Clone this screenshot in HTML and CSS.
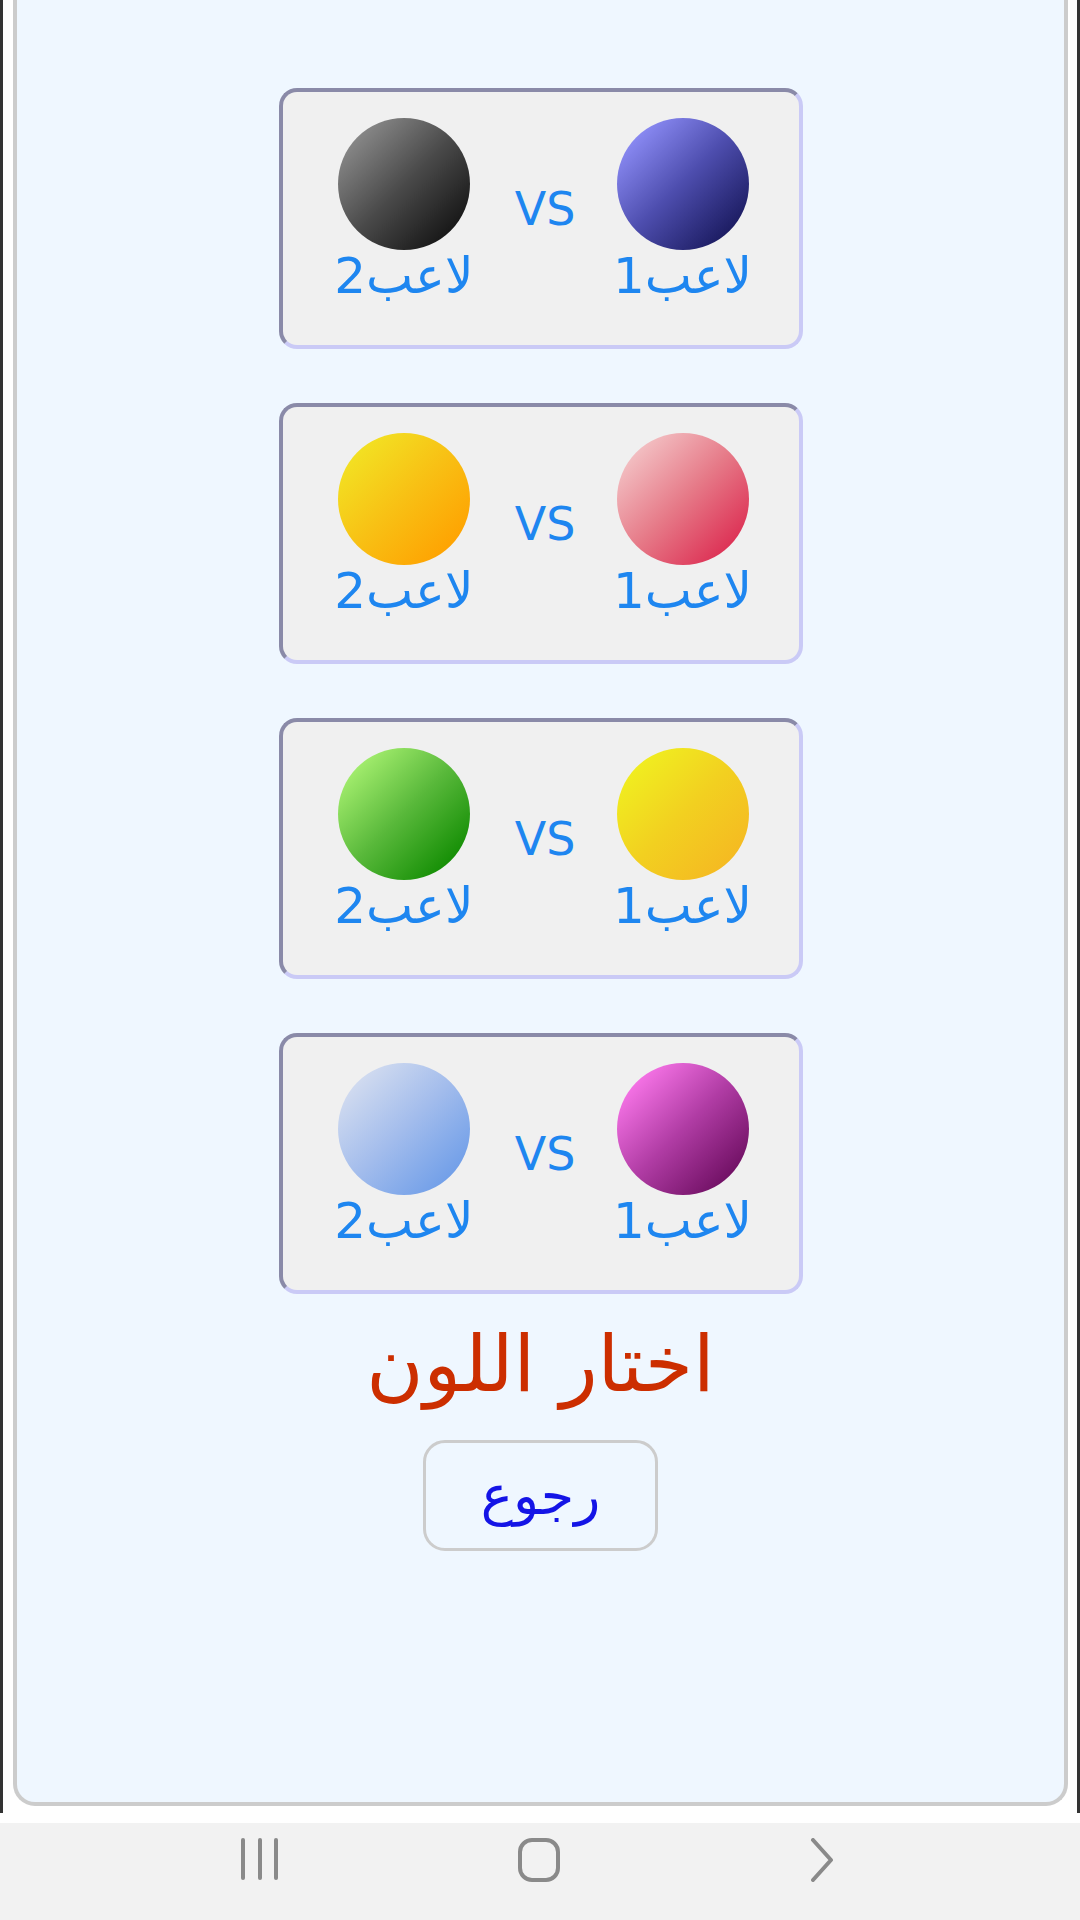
FILE: index.html
```html
<!DOCTYPE html>
<html lang="ar" dir="rtl">
<head>
  <meta charset="UTF-8" />
  <meta name="viewport" content="width=device-width, initial-scale=1.0"/>
  <title>اختار اللون</title>
  <link rel="stylesheet" href="styles.css">
</head>
<body>
  <div class="frame">
    <div class="panel">

      <div class="card">
        <div class="player">
          <div class="ball ball-blue"></div>
          <div class="name">لاعب1</div>
        </div>
        <div class="vs">VS</div>
        <div class="player">
          <div class="ball ball-black"></div>
          <div class="name">لاعب2</div>
        </div>
      </div>

      <div class="card">
        <div class="player">
          <div class="ball ball-pink"></div>
          <div class="name">لاعب1</div>
        </div>
        <div class="vs">VS</div>
        <div class="player">
          <div class="ball ball-orange"></div>
          <div class="name">لاعب2</div>
        </div>
      </div>

      <div class="card">
        <div class="player">
          <div class="ball ball-yellow"></div>
          <div class="name">لاعب1</div>
        </div>
        <div class="vs">VS</div>
        <div class="player">
          <div class="ball ball-green"></div>
          <div class="name">لاعب2</div>
        </div>
      </div>

      <div class="card">
        <div class="player">
          <div class="ball ball-purple"></div>
          <div class="name">لاعب1</div>
        </div>
        <div class="vs">VS</div>
        <div class="player">
          <div class="ball ball-sky"></div>
          <div class="name">لاعب2</div>
        </div>
      </div>

      <h1 class="titulo">اختار اللون</h1>

      <button class="boton-back">رجوع</button>
    </div>
  </div>

  <div class="navbar">
    <svg class="nav-icon" width="40" height="42" viewBox="0 0 40 42">
      <line x1="3" y1="2" x2="3" y2="40" stroke="#8a8a8a" stroke-width="4" stroke-linecap="round"/>
      <line x1="20" y1="2" x2="20" y2="40" stroke="#8a8a8a" stroke-width="4" stroke-linecap="round"/>
      <line x1="36" y1="2" x2="36" y2="40" stroke="#8a8a8a" stroke-width="4" stroke-linecap="round"/>
    </svg>
    <svg class="nav-icon" width="44" height="44" viewBox="0 0 44 44">
      <rect x="3" y="2" width="38" height="40" rx="12" ry="12" fill="none" stroke="#8a8a8a" stroke-width="4"/>
    </svg>
    <svg class="nav-icon" width="28" height="44" viewBox="0 0 28 44">
      <polyline points="4,2 22,22 4,42" fill="none" stroke="#8a8a8a" stroke-width="4" stroke-linecap="round" stroke-linejoin="round"/>
    </svg>
  </div>
</body>
</html>
```

FILE: styles.css
```css
body, html {
  margin: 0;
  padding: 0;
  background: #fff;
  font-family: 'DejaVu Sans', sans-serif;
}
.frame {
  height: 1813px;
  box-sizing: border-box;
  border-left: 3px solid #333;
  border-right: 3px solid #333;
  padding: 0 9px 0 10px;
  margin-bottom: 10px;
}
.panel {
  height: 1806px;
  box-sizing: border-box;
  background: #eff7ff;
  border: 4px solid #ccc;
  border-top: none;
  border-radius: 0 0 22px 22px;
  display: flex;
  flex-direction: column;
  align-items: center;
  padding-top: 88px;
}
.card {
  width: 524px;
  height: 261px;
  box-sizing: border-box;
  background: #f0f0f0;
  border: 4px solid;
  border-color: #8a8aa8 #cacaf6 #cacaf6 #8a8aa8;
  border-radius: 18px;
  margin-bottom: 54px;
  display: flex;
  justify-content: flex-start;
  align-items: flex-start;
  padding: 26px 36px 0 0;
}
.card:nth-of-type(4) { margin-bottom: 0; }
.player {
  width: 160px;
  display: flex;
  flex-direction: column;
  align-items: center;
}
.ball {
  width: 132px;
  height: 132px;
  border-radius: 50%;
}
.ball-blue { background: linear-gradient(135deg, #9090fa 10%, #4c4cac 50%, #17175a 90%); }
.ball-black { background: linear-gradient(135deg, #8e8e8e 10%, #4a4a4a 50%, #121212 90%); }
.ball-pink { background: linear-gradient(135deg, #f4c6c8 10%, #e67a88 50%, #dc2a50 90%); }
.ball-orange { background: linear-gradient(135deg, #f2e424 10%, #f8c014 50%, #ffa000 90%); }
.ball-yellow { background: linear-gradient(135deg, #f0f020 10%, #f2d020 50%, #f5b822 90%); }
.ball-green { background: linear-gradient(135deg, #aaf272 10%, #58b83a 50%, #0e8a00 90%); }
.ball-purple { background: linear-gradient(135deg, #fc78ec 10%, #b03ca4 50%, #6a0c5e 90%); }
.ball-sky { background: linear-gradient(135deg, #d6def0 10%, #a2bcec 50%, #6c9ce8 90%); }
.name {
  font-size: 50px;
  line-height: 52px;
  color: #1e86f0;
}
.vs {
  font-size: 46px;
  line-height: 50px;
  color: #1e86f0;
  margin: 66px 27px 0 31px;
  direction: ltr;
}
.titulo {
  margin: 20px 0 0;
  font-size: 78px;
  line-height: 100px;
  font-weight: normal;
  color: #cc2e00;
}
.boton-back {
  margin-top: 26px;
  width: 235px;
  height: 111px;
  background: transparent;
  border: 3px solid #ccc;
  border-radius: 22px;
  font-family: 'DejaVu Sans', sans-serif;
  font-size: 54px;
  color: #1414e6;
}
.navbar {
  height: 97px;
  box-sizing: border-box;
  padding-top: 15px;
  background: #f2f2f2;
  display: flex;
  align-items: flex-start;
  direction: ltr;
}
.navbar .nav-icon:nth-child(1) { margin-left: 240px; }
.navbar .nav-icon:nth-child(2) { margin-left: 237px; }
.navbar .nav-icon:nth-child(3) { margin-left: 248px; }
```
